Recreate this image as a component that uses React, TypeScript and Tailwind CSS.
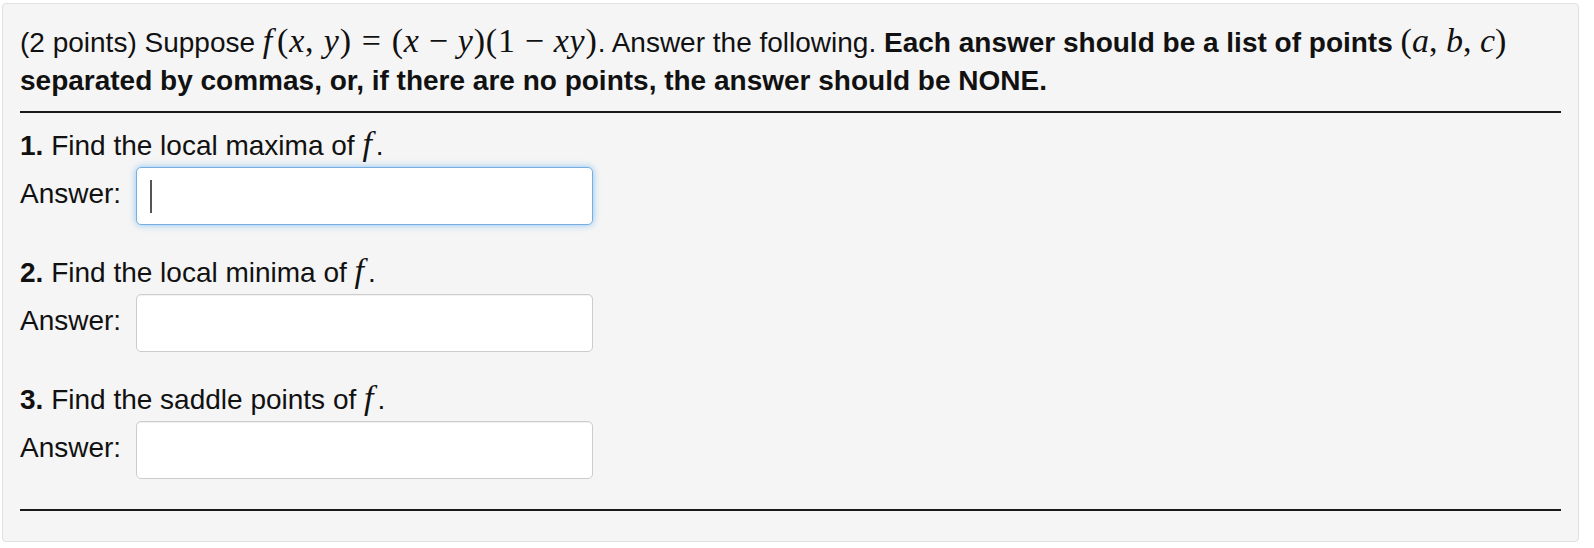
const M = ({ children, track }: { children: React.ReactNode; track?: boolean }) => (
  <span
    className={
      track
        ? "font-['Liberation_Serif',serif] text-[34px] leading-[0] tracking-[0.8px]"
        : "font-['Liberation_Serif',serif] text-[34px] leading-[0]"
    }
  >
    {children}
  </span>
);

const V = ({ children, r = 0 }: { children: React.ReactNode; r?: number }) => (
  <i className={r ? 'pr-[4px]' : ''}>{children}</i>
);

const Op = ({ children, wide }: { children: React.ReactNode; wide?: boolean }) => (
  <span className={wide ? 'mx-[10px]' : 'mx-[9px]'}>{children}</span>
);

const questions = [
  { n: '1.', text: 'Find the local maxima of', focused: true },
  { n: '2.', text: 'Find the local minima of', focused: false },
  { n: '3.', text: 'Find the saddle points of', focused: false },
];

export default function App() {
  return (
    <div className="min-h-[548px] bg-white pl-[2px] pt-[3px] font-['Liberation_Sans',Arial,sans-serif] text-[#111]">
      <div className="w-[1577px] h-[539px] rounded-[4px] border border-[#e0e0e0] bg-[#f5f5f5] pl-[17px] pr-[17px] pt-[20px]">
        <p className="text-[28px] leading-[38px] whitespace-nowrap">
          (2 points) Suppose{' '}
          <M track>
            <V r={1}>f</V>(<V>x</V>, <V>y</V>)<Op wide>=</Op>(<V>x</V>
            <Op>−</Op>
            <V>y</V>)(1<Op>−</Op>
            <V>x</V>
            <V>y</V>)
          </M>
          . Answer the following. <b>Each answer should be a list of points</b>{' '}
          <M>
            (<V>a</V>, <V>b</V>, <V>c</V>)
          </M>
          <br />
          <b>separated by commas, or, if there are no points, the answer should be NONE.</b>
        </p>
        <div className="mt-[11px] h-[2px] bg-[#1a1a1a]" />

        <div className="mt-[12px] flex flex-col gap-[27px]">
          {questions.map((q) => (
            <div key={q.n}>
              <div className="h-[40px] pt-[2px] text-[28px] leading-[38px]">
                <b>{q.n}</b> {q.text}{' '}
                <M>
                  <V r={1}>f</V>
                </M>
                .
              </div>
              <div className="mt-[2px] flex items-start gap-[15px]">
                <span className="mt-[8px] text-[28px] leading-[38px]">Answer:</span>
                {q.focused ? (
                  <div className="flex h-[58px] w-[457px] items-center rounded-[5px] border border-[#74aee3] bg-white pl-[13px] shadow-[0_0_7px_rgba(82,168,236,0.65)]">
                    <div className="h-[33px] w-[2px] bg-[#555]" />
                  </div>
                ) : (
                  <div className="h-[58px] w-[457px] rounded-[5px] border border-[#cccccc] bg-white shadow-[inset_0_1px_1px_rgba(0,0,0,0.06)]" />
                )}
              </div>
            </div>
          ))}
        </div>

        <div className="mt-[30px] h-[2px] bg-[#1a1a1a]" />
      </div>
    </div>
  );
}
